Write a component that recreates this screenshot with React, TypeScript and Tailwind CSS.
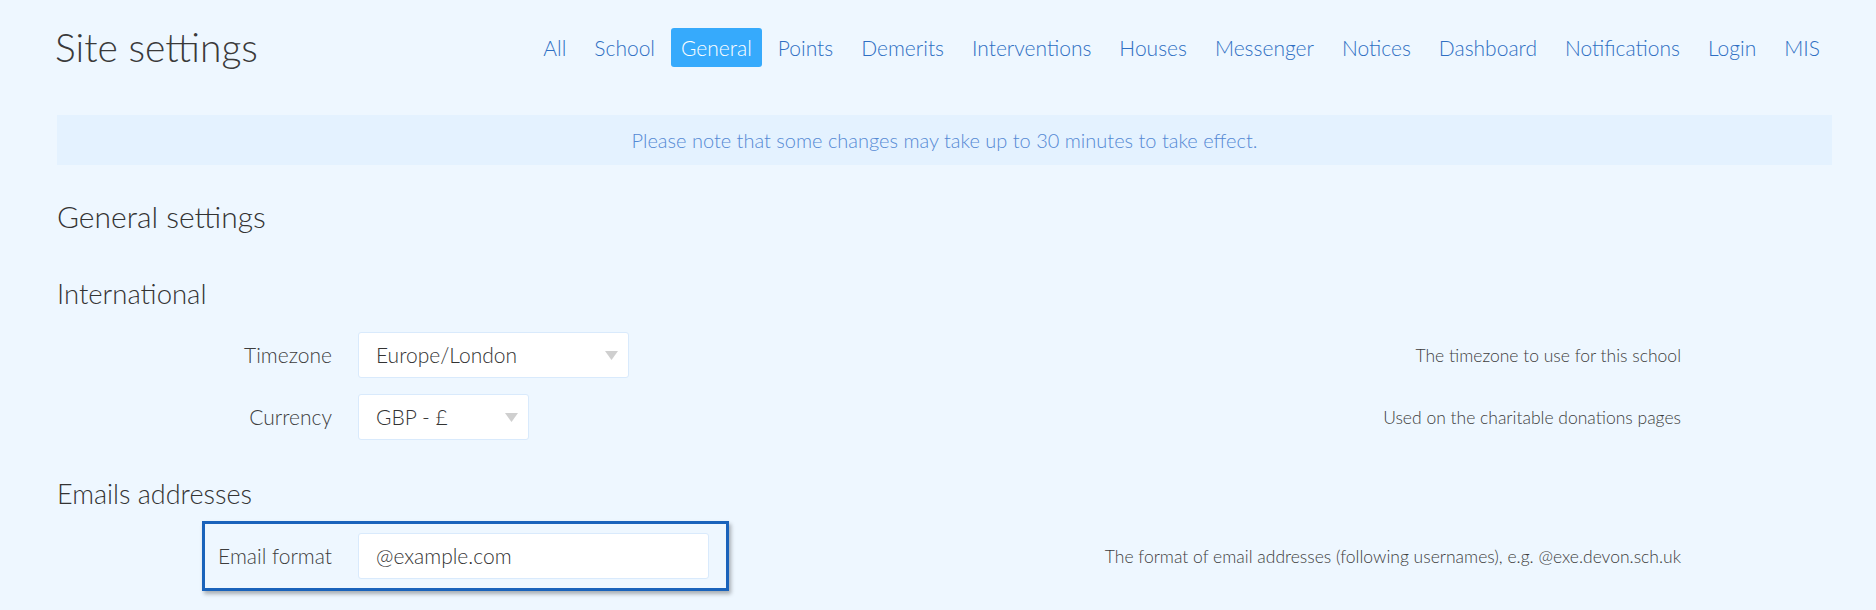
import React from 'react';

const navItems = [
  'All',
  'School',
  'General',
  'Points',
  'Demerits',
  'Interventions',
  'Houses',
  'Messenger',
  'Notices',
  'Dashboard',
  'Notifications',
  'Login',
  'MIS',
];

const Arrow = () => (
  <svg width="13" height="9" viewBox="0 0 13 9" className="shrink-0">
    <path d="M0 0 H13 L6.5 9 Z" fill="#cfcfcf" />
  </svg>
);

const Row = ({
  label,
  help,
  children,
  className = '',
}: {
  label: string;
  help: string;
  children: React.ReactNode;
  className?: string;
}) => (
  <div className={`relative flex items-center ${className}`}>
    <div className="w-[275px] shrink-0 text-right text-[21px] font-light text-[#3d3d3d]">{label}</div>
    <div className="ml-[26px] shrink-0">{children}</div>
    <div className="flex-1 pr-[151px] pt-[3px] text-right text-[17.5px] font-light text-[#3d3d3d]">{help}</div>
  </div>
);

const Select = ({ value, width }: { value: string; width: string }) => (
  <div
    className={`flex h-[46px] items-center justify-between rounded-[3px] border border-[#d9eafc] bg-white pl-[17px] pr-[10px] ${width}`}
  >
    <span className="text-[21px] font-light text-[#333]">{value}</span>
    <Arrow />
  </div>
);

export default function App() {
  return (
    <div
      className="min-h-[610px] overflow-hidden bg-[#eef7ff] pl-[57px] pr-[44px]"
      style={{ fontFamily: 'Lato, "Open Sans", sans-serif' }}
    >
      <div className="flex items-center justify-between pt-[28px]">
        <h1 className="ml-[-2px] text-[39px] font-light leading-[39px] text-[#3a3a3a]">Site settings</h1>
        <nav className="flex items-center gap-[4px]">
          {navItems.map((item) =>
            item === 'General' ? (
              <a key={item} className="rounded-[3px] bg-[#36aafc] px-[10px] py-[6px] text-[21px] font-light leading-[27px] text-white">
                {item}
              </a>
            ) : (
              <a key={item} className="px-[12px] py-[6px] text-[21px] font-light leading-[27px] text-[#2f6fc3]">
                {item}
              </a>
            )
          )}
        </nav>
      </div>

      <div className="mt-[48px] flex h-[50px] items-center justify-center bg-[#e4f2ff] text-[20px] font-light text-[#5589d4]">
        Please note that some changes may take up to 30 minutes to take effect.
      </div>

      <h2 className="mt-[36px] text-[30px] font-light leading-[30px] text-[#333]">General settings</h2>

      <h3 className="mt-[49px] text-[27.5px] font-light leading-[27px] text-[#333]">International</h3>

      <Row label="Timezone" help="The timezone to use for this school" className="mt-[25px]">
        <Select value="Europe/London" width="w-[271px]" />
      </Row>
      <Row label="Currency" help="Used on the charitable donations pages" className="mt-[16px]">
        <Select value="GBP - £" width="w-[171px]" />
      </Row>

      <h3 className="mt-[40px] text-[27px] font-light leading-[27px] text-[#333]">Emails addresses</h3>

      <Row
        label="Email format"
        help="The format of email addresses (following usernames), e.g. @exe.devon.sch.uk"
        className="mt-[26px]"
      >
        <div className="flex h-[46px] w-[351px] items-center rounded-[3px] border border-[#d9eafc] bg-white pl-[17px] text-[21px] font-light text-[#333]">
          @example.com
        </div>
        <div className="pointer-events-none absolute left-[145px] top-[-12px] h-[70px] w-[527px] border-[3px] border-[#1a63bb] shadow-[2px_3px_4px_rgba(0,0,0,0.3)]" />
      </Row>
    </div>
  );
}
